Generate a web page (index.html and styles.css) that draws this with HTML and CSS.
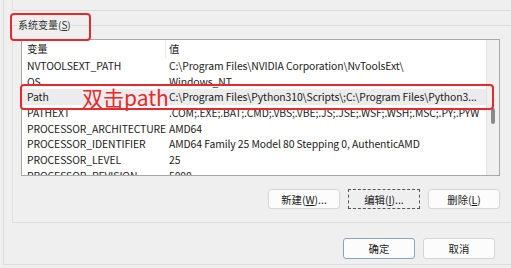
FILE: index.html
```html
<!DOCTYPE html>
<html>
<head>
	<meta charset="utf-8">
	<title>环境变量</title>
	<link rel="stylesheet" href="styles.css">
</head>
<body>
	<div class="window">
		<div class="user-group"></div>
		<div class="sys-group">
			<span class="group-label">系统变量(<u>S</u>)</span>
			<div class="list">
				<div class="rows">
					<div class="row head"><span class="name">变量</span><span class="value">值</span></div>
					<div class="row"><span class="name">NVTOOLSEXT_PATH</span><span class="value">C:\Program Files\NVIDIA Corporation\NvToolsExt\</span></div>
					<div class="row"><span class="name">OS</span><span class="value">Windows_NT</span></div>
					<div class="row selected"><span class="name">Path</span><span class="value">C:\Program Files\Python310\Scripts\;C:\Program Files\Python3...</span></div>
					<div class="row"><span class="name">PATHEXT</span><span class="value">.COM;.EXE;.BAT;.CMD;.VBS;.VBE;.JS;.JSE;.WSF;.WSH;.MSC;.PY;.PYW</span></div>
					<div class="row"><span class="name">PROCESSOR_ARCHITECTURE</span><span class="value">AMD64</span></div>
					<div class="row"><span class="name">PROCESSOR_IDENTIFIER</span><span class="value">AMD64 Family 25 Model 80 Stepping 0, AuthenticAMD</span></div>
					<div class="row"><span class="name">PROCESSOR_LEVEL</span><span class="value">25</span></div>
					<div class="row"><span class="name">PROCESSOR_REVISION</span><span class="value">5000</span></div>
				</div>
				<div class="scrollbar"><div class="thumb"></div></div>
			</div>
			<div class="list-buttons">
				<button class="btn">新建(<u>W</u>)...</button>
				<button class="btn focus">编辑(<u>I</u>)...</button>
				<button class="btn">删除(<u>L</u>)</button>
			</div>
		</div>
		<div class="dialog-buttons">
			<button class="btn default">确定</button>
			<button class="btn">取消</button>
		</div>

		<!-- 标注 -->
		<div class="mark mark-label"></div>
		<div class="mark mark-path"></div>
		<div class="mark-text">双击path</div>
	</div>
</body>
</html>
```
FILE: styles.css
```css
*{
	padding: 0;
	margin: 0;
	box-sizing: border-box;
}
body{
	background: #f0eff0;
	font-family: "Noto Sans CJK SC", sans-serif;
	font-size: 10.4px;
	color: #1b1b1b;
}
.window{
	position: relative;
	margin-left: 3px;
	width: 508px;
	height: 265px;
	padding-left: 8px;
	border-left: 1px solid #dcdbdc;
	border-bottom: 1px solid #dcdbdc;
}
.user-group{
	height: 11px;
	border-left: 1px solid #e2e1e2;
	border-bottom: 1px solid #dcdbdc;
}
.sys-group{
	position: relative;
	margin-top: 14px;
	height: 198px;
	padding: 13px 0 0 8px;
	border-top: 1px solid #dcdbdc;
	border-left: 1px solid #e2e1e2;
	border-bottom: 1px solid #dcdbdc;
}
.group-label{
	position: absolute;
	left: 4px;
	top: -9px;
	padding: 0 1px;
	line-height: 16px;
	font-size: 10px;
	background: #f0eff0;
	color: #333;
}
.list{
	display: flex;
	width: 479px;
	height: 137px;
	background: #fff;
	border: 1px solid #a7a7a7;
	overflow: hidden;
}
.rows{
	flex: 1;
	overflow: hidden;
	letter-spacing: -0.1px;
}
.row{
	display: flex;
	height: 15.67px;
	line-height: 15.67px;
	white-space: nowrap;
}
.row.head{
	height: 18px;
	line-height: 18px;
}
.row.selected{
	background: #ececec;
}
.name{
	width: 143px;
	flex: none;
	padding-left: 5px;
}
.value{
	padding-left: 4px;
	overflow: hidden;
}
.head .value{
	border-left: 1px solid #e8e8e8;
	padding-left: 3px;
}
.scrollbar{
	position: relative;
	width: 13px;
	background: #f0f0f0;
	border-left: 1px solid #e4e4e4;
}
.thumb{
	position: absolute;
	left: 4px;
	top: 68px;
	width: 4px;
	height: 16px;
	border-radius: 2px;
	background: #8a8a8a;
}
.list-buttons{
	display: flex;
	justify-content: flex-end;
	gap: 8px;
	width: 479px;
	margin-top: 13px;
}
.btn{
	width: 72px;
	height: 20px;
	font-family: inherit;
	font-size: 10.4px;
	color: #1b1b1b;
	background: #fcfcfc;
	border: 1px solid #d6d5d6;
	border-radius: 3px;
}
.btn u{
	text-decoration-thickness: 1px;
	text-underline-offset: 1px;
}
.btn.focus{
	background: #f0eff0;
	border: 1px dashed #555;
	border-radius: 0;
}
.dialog-buttons{
	display: flex;
	justify-content: flex-end;
	gap: 8px;
	width: 483px;
	margin-top: 15px;
}
.dialog-buttons .btn{
	height: 21px;
}
.btn.default{
	border-color: #8aa3c2;
}
.mark{
	position: absolute;
	border: 2px solid #e52a2c;
	border-radius: 4px;
}
.mark-label{
	left: 6px;
	top: 13px;
	width: 81px;
	height: 28px;
}
.mark-path{
	left: 16px;
	top: 84px;
	width: 474px;
	height: 26px;
}
.mark-text{
	position: absolute;
	left: 78px;
	top: 84px;
	font-size: 21px;
	line-height: 26px;
	color: #e52a2c;
}
```
